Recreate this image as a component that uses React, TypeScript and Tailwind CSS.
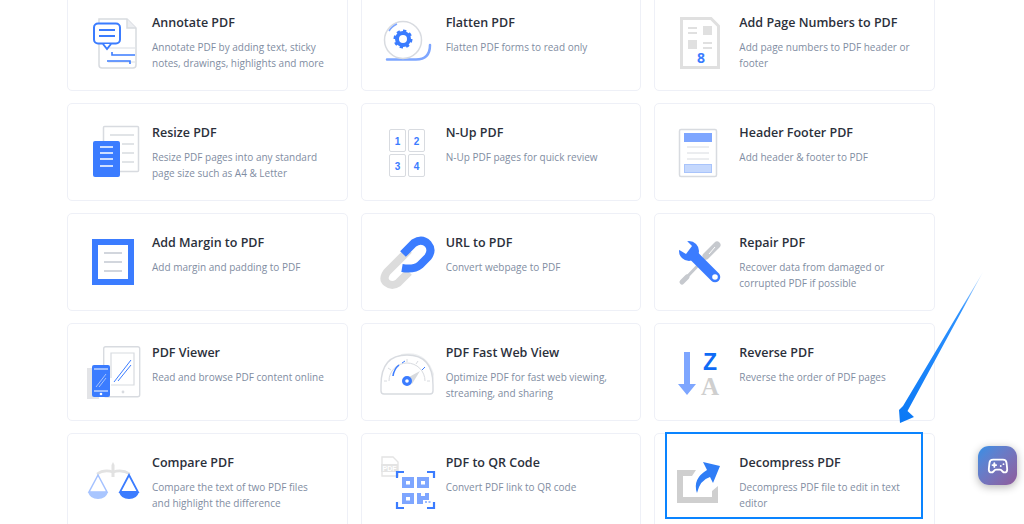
import React from 'react';
import { Gamepad2 } from 'lucide-react';

const BLUE = '#3b7cff';
const LIGHT = '#7ea6ff';
const GRAY = '#d8dbe0';
const SOFT = '#e2e2e2';

const icons: Record<string, React.ReactNode> = {
  annotate: (
    <>
      <path d="M17 9H45L54 18V55Q54 58 51 58H20Q17 58 17 55V9Z" fill="#fff" stroke={GRAY} strokeWidth="1.5" />
      <path d="M45 9V18H54" fill="#eceef1" stroke={GRAY} strokeWidth="1.5" />
      <path d="M26 38H53M26 52H53" stroke="#eceef1" strokeWidth="2" />
      <rect x="12" y="13.5" width="26" height="20" rx="4" fill="#fff" stroke={BLUE} strokeWidth="2" />
      <path d="M21 34L25 39L29 34" fill="#fff" stroke={BLUE} strokeWidth="2" />
      <path d="M17 20H33M17 26H33" stroke={BLUE} strokeWidth="2" />
      <path d="M30 42V45H53M25 51H48V54" fill="none" stroke={BLUE} strokeWidth="1.6" />
    </>
  ),
  resize: (
    <>
      <rect x="21.5" y="6.5" width="35" height="45" rx="1" fill="#fff" stroke={GRAY} strokeWidth="1.5" />
      <path d="M28 15H52M40 24H52M40 33H52M40 42H52" stroke={GRAY} strokeWidth="1.5" />
      <rect x="11" y="21" width="27" height="36" rx="2" fill={BLUE} />
      <path d="M18 27H31M18 33H31M18 39H31M18 46H31" stroke="#fff" strokeWidth="1.5" />
    </>
  ),
  flatten: (
    <>
      <path d="M11 49.5H40Q54 49.5 54 35" fill="none" stroke={LIGHT} strokeWidth="2.5" strokeLinecap="round" />
      <circle cx="27" cy="30" r="18.5" fill="#fff" stroke={GRAY} strokeWidth="1.5" />
      <path d="M13 21Q16 16 21 14" fill="none" stroke={LIGHT} strokeWidth="1.5" />
      <circle cx="27" cy="29" r="6" fill="none" stroke={BLUE} strokeWidth="4" />
      <circle cx="27" cy="29" r="8.2" fill="none" stroke={BLUE} strokeWidth="2.6" strokeDasharray="3.2 3.2" />
    </>
  ),
  nup: (
    <>
      {[[13, 9, '1'], [32, 9, '2'], [13, 34, '3'], [32, 34, '4']].map(([x, y, n]) => (
        <g key={n as string}>
          <rect x={(x as number) + 0.5} y={(y as number) + 0.5} width="16" height="22" rx="1.5" fill="#fff" stroke={GRAY} />
          <text x={(x as number) + 8.5} y={(y as number) + 16} textAnchor="middle" fontSize="10" fontWeight="700" fill={BLUE} fontFamily="Liberation Sans">
            {n}
          </text>
        </g>
      ))}
    </>
  ),
  pagenumbers: (
    <>
      <path d="M12.5 8.5H42L49.5 16V57.5H12.5Z" fill="#fff" stroke="#e0e0e0" strokeWidth="3" />
      <path d="M19 18H28M19 23H28M34 33H43M34 38H43" stroke="#e0e0e0" strokeWidth="2" />
      <rect x="34" y="16" width="9" height="9" fill="#e0e0e0" />
      <rect x="19" y="30" width="9" height="9" fill="#e0e0e0" />
      <text x="32" y="53" textAnchor="middle" fontSize="14" fontWeight="700" fill={BLUE} fontFamily="Open Sans">
        8
      </text>
    </>
  ),
  headerfooter: (
    <>
      <rect x="10.5" y="9.5" width="37" height="47" rx="1.5" fill="#fff" stroke={GRAY} strokeWidth="1.5" />
      <rect x="15" y="13" width="28" height="9" fill={LIGHT} />
      <path d="M18 27H40M18 33H40M18 39H40" stroke={GRAY} />
      <rect x="15.5" y="44.5" width="27" height="8" fill="#c5d8fd" stroke="#a9c4fb" />
    </>
  ),
  margin: (
    <>
      <rect x="10" y="9" width="42" height="46" fill={BLUE} />
      <rect x="16" y="15" width="30" height="34" fill="#fff" />
      <path d="M22 23H40M22 32H40M22 41H40" stroke="#c3c9d2" strokeWidth="1.3" />
    </>
  ),
  url: (
    <g fill="none">
      <path d="M33 20L11 42Q6 49 11 53Q16 57 22 53L33 42" stroke="#dcdcdc" strokeWidth="8" />
      <path d="M27 24L38 13Q46 8 52 14Q57 20 52 27L44 35Q38 40 26 38" stroke={BLUE} strokeWidth="8" />
    </g>
  ),
  repair: (
    <>
      <path d="M38 26L16 49" stroke="#c6c9ce" strokeWidth="3" />
      <path d="M13 52L18 47" stroke="#c6c9ce" strokeWidth="5" strokeLinecap="round" />
      <path d="M37 26L48 15" stroke="#c6c9ce" strokeWidth="7" strokeLinecap="round" />
      <path d="M40 24L46 17" stroke="#fff" strokeWidth="1" />
      <path d="M24 25L46 47" stroke={BLUE} strokeWidth="10.5" strokeLinecap="round" />
      <circle cx="20" cy="21" r="10" fill={BLUE} />
      <path d="M16 9L7 18L17 24L23 16Z" fill="#fff" />
      <circle cx="46" cy="47" r="2.8" fill="#fff" />
    </>
  ),
  viewer: (
    <>
      <rect x="5" y="28" width="12" height="31" fill="#e3e4e7" />
      <rect x="21.7" y="6.7" width="36" height="50" rx="2" fill="#fff" stroke={GRAY} strokeWidth="1.4" />
      <path d="M29 38V13H52V45H29" fill="none" stroke={GRAY} strokeWidth="1.2" />
      <circle cx="41" cy="52" r="1.4" fill={GRAY} />
      <path d="M32 42L49 20M36 41L49 25" stroke={BLUE} strokeWidth="1" />
      <rect x="10" y="25" width="18" height="32" rx="2" fill={BLUE} />
      <path d="M12 29H26M12 51H26" stroke="#fff" strokeWidth="1" />
      <path d="M14 47L24 34M17 47L24 38" stroke="#a9c4fb" strokeWidth="1" />
      <circle cx="19" cy="54" r="1.3" fill="#fff" />
    </>
  ),
  fastweb: (
    <>
      <path d="M25 14Q50 9 58 34L56 50H40Z" fill="#eef0f2" />
      <path d="M8 54H54Q57 54 57 51V45Q57 15 31 15Q5 15 5 45V51Q5 54 8 54Z" fill="#fff" stroke={GRAY} strokeWidth="1.4" />
      <path d="M13 41A18 18 0 0 1 49 41" fill="none" stroke={GRAY} strokeWidth="1" />
      <path d="M17 36Q18 29 23 25" fill="none" stroke={BLUE} strokeWidth="1.6" />
      <path d="M26 23L29 21M46 30L49 27" stroke={BLUE} strokeWidth="1" />
      <path d="M8 41H11M51 41H54M12 28L15 30M31 19V22M42 21L40 24" stroke={GRAY} strokeWidth="1" />
      <path d="M33 37L44 31L36 44Z" fill="#d7dade" />
      <circle cx="31" cy="41" r="3.4" fill="#fff" stroke={BLUE} strokeWidth="3.2" />
    </>
  ),
  reverse: (
    <>
      <path d="M15 12H21V44H27L18 55L9 44H15Z" fill={LIGHT} />
      <text x="41" y="30" textAnchor="middle" fontSize="23" fontWeight="700" fill="#0f6bf5" fontFamily="Liberation Sans">
        Z
      </text>
      <text x="41" y="55" textAnchor="middle" fontSize="25" fontWeight="700" fill="#cfcfcf" fontFamily="Liberation Serif">
        A
      </text>
    </>
  ),
  compare: (
    <>
      <path d="M15 24Q22 19 31 22Q40 19 48 24" fill="none" stroke={SOFT} strokeWidth="2.5" />
      <path d="M29.5 27V15L31 12L32.5 15V27Z" fill={SOFT} />
      <path d="M16 25L7 42H25Z" fill="none" stroke={LIGHT} strokeOpacity="0.7" strokeWidth="1.5" />
      <path d="M6 42H26Q24 49 16 49Q8 49 6 42Z" fill="#a9c6ff" />
      <path d="M47 25L38 42H56Z" fill="none" stroke={BLUE} strokeWidth="1.8" />
      <path d="M37 42H57Q55 49 47 49Q39 49 37 42Z" fill={BLUE} />
    </>
  ),
  qr: (
    <>
      <path d="M6 7H17L22 12V26H6Z" fill="#fff" stroke="#e4e4e4" strokeWidth="1.4" />
      <rect x="5" y="14" width="17" height="8" fill="#e4e4e4" />
      <text x="13.5" y="21" textAnchor="middle" fontSize="7" fontWeight="700" fill="#fff" fontFamily="Liberation Sans">
        PDF
      </text>
      <path d="M21 28V22H28M51 22H58V28M21 52V58H28M51 58H58V52" fill="none" stroke={BLUE} strokeWidth="2.2" />
      <rect x="26" y="27" width="12" height="11" fill={LIGHT} />
      <rect x="41" y="27" width="12" height="11" fill={LIGHT} />
      <rect x="26" y="43" width="12" height="11" fill={LIGHT} />
      <rect x="30" y="31" width="4" height="3.5" fill="#fff" />
      <rect x="45" y="31" width="4" height="3.5" fill="#fff" />
      <rect x="30" y="47" width="4" height="3.5" fill="#fff" />
      <path d="M41 43H45V46H49V43H53V50H47V54H41Z" fill={LIGHT} />
      <path d="M49 52H51M52.5 52H54.5" stroke={LIGHT} strokeWidth="1.4" />
    </>
  ),
  decompress: (
    <>
      <path d="M8 20H27L23 26H14V47H43V41L49 36V53H8Z" fill="#cfcfcf" />
      <path d="M34 12L51 16L44 33L41 27Q31 30 28 43Q23 29 38 20Z" fill="#2f7df6" />
    </>
  ),
};

const tools = [
  { icon: 'annotate', title: 'Annotate PDF', desc: 'Annotate PDF by adding text, sticky notes, drawings, highlights and more' },
  { icon: 'flatten', title: 'Flatten PDF', desc: 'Flatten PDF forms to read only' },
  { icon: 'pagenumbers', title: 'Add Page Numbers to PDF', desc: 'Add page numbers to PDF header or footer' },
  { icon: 'resize', title: 'Resize PDF', desc: 'Resize PDF pages into any standard page size such as A4 & Letter' },
  { icon: 'nup', title: 'N-Up PDF', desc: 'N-Up PDF pages for quick review' },
  { icon: 'headerfooter', title: 'Header Footer PDF', desc: 'Add header & footer to PDF' },
  { icon: 'margin', title: 'Add Margin to PDF', desc: 'Add margin and padding to PDF' },
  { icon: 'url', title: 'URL to PDF', desc: 'Convert webpage to PDF' },
  { icon: 'repair', title: 'Repair PDF', desc: 'Recover data from damaged or corrupted PDF if possible' },
  { icon: 'viewer', title: 'PDF Viewer', desc: 'Read and browse PDF content online' },
  { icon: 'fastweb', title: 'PDF Fast Web View', desc: 'Optimize PDF for fast web viewing, streaming, and sharing' },
  { icon: 'reverse', title: 'Reverse PDF', desc: 'Reverse the order of PDF pages' },
  { icon: 'compare', title: 'Compare PDF', desc: 'Compare the text of two PDF files and highlight the difference' },
  { icon: 'qr', title: 'PDF to QR Code', desc: 'Convert PDF link to QR code' },
  { icon: 'decompress', title: 'Decompress PDF', desc: 'Decompress PDF file to edit in text editor' },
];

const ToolCard: React.FC<{ icon: string; title: string; desc: string }> = ({ icon, title, desc }) => (
  <div className="h-[98px] bg-white border border-[#eef0f7] rounded-[5px] flex pl-[14px] pr-[22px] pt-[16px]">
    <svg width="64" height="64" viewBox="0 0 64 64" className="shrink-0">
      {icons[icon]}
    </svg>
    <div className="ml-[6px] min-w-0 pt-[3px]">
      <h3 className="text-[12.5px] leading-[20px] font-semibold text-[#2b303b]">{title}</h3>
      <p className="mt-[6px] text-[10px] leading-[16px] text-[#7f8da2]">{desc}</p>
    </div>
  </div>
);

export default function App() {
  return (
    <div className="relative w-[1024px] h-[524px] overflow-hidden bg-white font-['Open_Sans',sans-serif]">
      <div className="w-[868px] ml-[67px] -mt-[7px] grid grid-cols-3 gap-x-[13px] gap-y-[12px]">
        {tools.map((tool) => (
          <ToolCard key={tool.title} {...tool} />
        ))}
      </div>

      {/* annotation drawn over the screenshot */}
      <div className="absolute left-[665px] top-[432px] w-[258px] h-[87px] border-2 border-[#0a84ff]" />
      <svg className="absolute left-[890px] top-[265px]" width="100" height="165" viewBox="890 265 100 165">
        <defs>
          <linearGradient id="arrowFade" x1="983" y1="272" x2="900" y2="423" gradientUnits="userSpaceOnUse">
            <stop offset="0" stopColor="#d8ebff" />
            <stop offset="0.25" stopColor="#2f93ff" />
            <stop offset="1" stopColor="#0a78f5" />
          </linearGradient>
        </defs>
        <path d="M900 423L914 417L907.5 411L983 272L903 406L899 410Z" fill="url(#arrowFade)" />
      </svg>

      <button className="absolute left-[978px] top-[446px] w-[39px] h-[39px] rounded-[11px] flex items-center justify-center bg-gradient-to-br from-[#2f8fe6] to-[#8e5b9b] shadow-[0_2px_8px_rgba(0,0,0,0.3)]">
        <Gamepad2 size={22} className="text-white" />
      </button>
    </div>
  );
}
